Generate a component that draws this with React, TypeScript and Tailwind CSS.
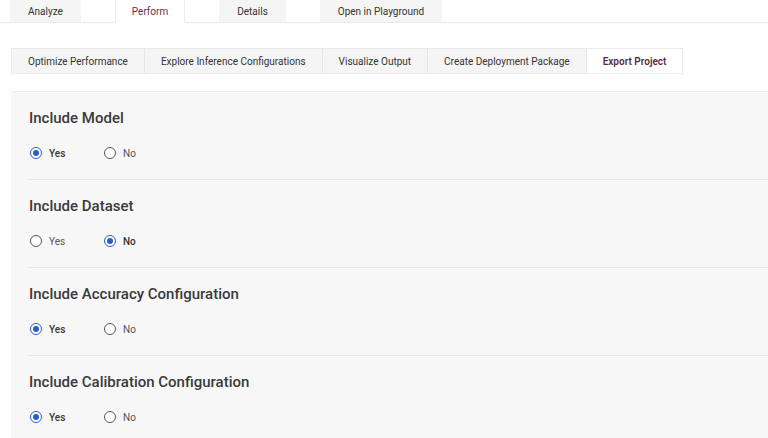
import { useState } from "react";

const topTabs = ["Analyze", "Perform", "Details", "Open in Playground"];
const subTabs = [
  "Optimize Performance",
  "Explore Inference Configurations",
  "Visualize Output",
  "Create Deployment Package",
  "Export Project",
];

const sections = [
  { title: "Include Model", value: "yes" },
  { title: "Include Dataset", value: "no" },
  { title: "Include Accuracy Configuration", value: "yes" },
  { title: "Include Calibration Configuration", value: "yes" },
];

function Radio({ checked, label }: { checked: boolean; label: string }) {
  return (
    <label className="flex items-center gap-[7px] cursor-pointer">
      {checked ? (
        <span className="flex h-[12px] w-[12px] items-center justify-center rounded-full border-[1.5px] border-[#2c5dc4] bg-white">
          <span className="h-[6px] w-[6px] rounded-full bg-[#2c5dc4]" />
        </span>
      ) : (
        <span className="h-[12px] w-[12px] rounded-full border-[1.5px] border-[#555] bg-white" />
      )}
      <span
        className={
          checked
            ? "text-[10px] font-medium text-[#333]"
            : "text-[10px] text-[#555]"
        }
      >
        {label}
      </span>
    </label>
  );
}

export default function App() {
  const [values, setValues] = useState(sections.map((s) => s.value));

  return (
    <div className="h-[438px] w-[768px] overflow-hidden bg-white font-['Roboto',sans-serif] text-[#333]">
      {/* top tabs */}
      <div className="flex h-[23px] border-b border-[#e8e8e8] pl-[10px]">
        {topTabs.map((tab) => {
          const active = tab === "Perform";
          return (
            <div
              key={tab}
              className={
                active
                  ? "mr-[34px] -mb-px flex items-center border-x border-[#eeeeee] bg-white px-[16px] text-[10px] text-[#6b2d4f]"
                  : "mr-[34px] flex items-center bg-[#f5f5f5] px-[18px] text-[10px] text-[#333]"
              }
            >
              {tab}
            </div>
          );
        })}
      </div>

      {/* sub tabs */}
      <div className="ml-[11px] mt-[25px] flex h-[26px] w-max border border-[#ebebeb]">
        {subTabs.map((tab, i) => {
          const active = tab === "Export Project";
          return (
            <div
              key={tab}
              className={
                (i > 0 ? "border-l border-[#e6e6e6] " : "") +
                (active
                  ? "flex items-center bg-white px-[16px] text-[10px] font-semibold text-[#5b2a46]"
                  : "flex items-center bg-[#f5f5f5] px-[16px] text-[10px] text-[#333]")
              }
            >
              {tab}
            </div>
          );
        })}
      </div>

      {/* panel */}
      <div className="ml-[11px] mt-[17px] border-t border-[#ececec] bg-[#f7f7f7] pl-[18px]">
        {sections.map((s, i) => (
          <div key={s.title} className="border-b border-[#e6e6e6] pt-[16px] pb-[18px]">
            <h2 className="h-[20px] text-[15px] font-medium leading-[20px] text-[#3a3a3a]">
              {s.title}
            </h2>
            <div className="mt-[17px] flex h-[16px] items-center pl-[1px]">
              <div
                className="w-[74px]"
                onClick={() =>
                  setValues((v) => v.map((x, j) => (j === i ? "yes" : x)))
                }
              >
                <Radio checked={values[i] === "yes"} label="Yes" />
              </div>
              <div
                onClick={() =>
                  setValues((v) => v.map((x, j) => (j === i ? "no" : x)))
                }
              >
                <Radio checked={values[i] === "no"} label="No" />
              </div>
            </div>
          </div>
        ))}
      </div>
    </div>
  );
}
